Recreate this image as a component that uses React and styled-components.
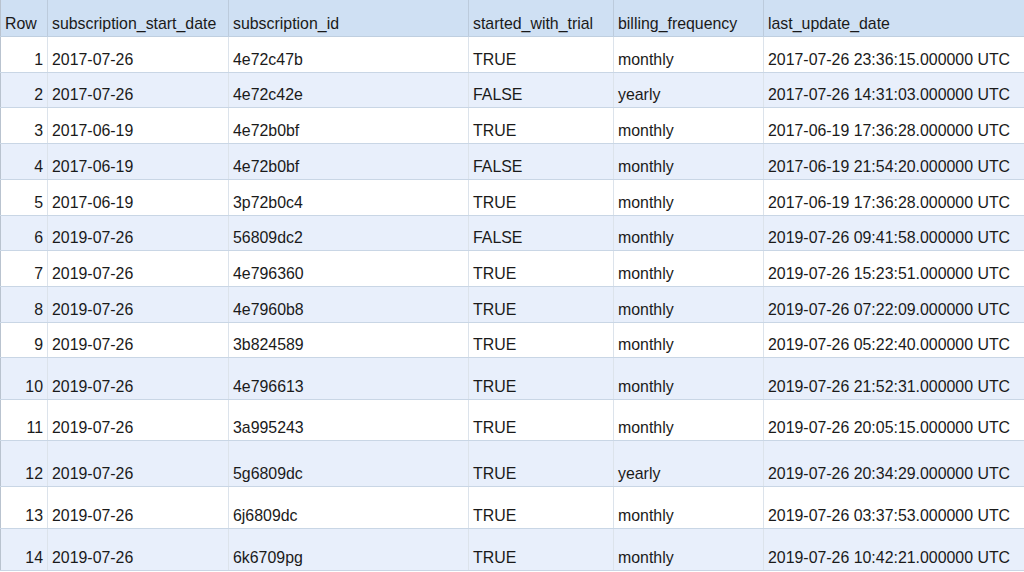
import React from 'react'
import styled, { createGlobalStyle } from 'styled-components'

const GlobalStyle = createGlobalStyle`
  body {
    margin: 0;
    background: #ffffff;
    font-family: "Liberation Sans", Arial, sans-serif;
    overflow: hidden;
  }
`

const Table = styled.table`
  border-collapse: collapse;
  table-layout: fixed;
  width: 1024px;
  font-size: 15.9px;
  color: #1a1a1a;
  border-left: 1px solid #b9c3cf;
`

const HeadRow = styled.tr`
  height: 36px;
`

const HeadCell = styled.th`
  background: #cfe0f3;
  padding: 0 4px 3px;
  font-weight: 400;
  text-align: left;
  vertical-align: bottom;
  border-right: 1px solid #bccbdc;
  border-bottom: 1px solid #bfcfe0;
  white-space: nowrap;
  overflow: hidden;
  line-height: 18px;
`

const Row = styled.tr`
  height: ${({ $h }) => $h}px;
  background: ${({ $alt }) => ($alt ? '#e8effb' : '#ffffff')};
`

const Cell = styled.td`
  padding: 0 4px 3px;
  vertical-align: bottom;
  text-align: ${({ $num }) => ($num ? 'right' : 'left')};
  border-right: 1px solid #dce3eb;
  border-bottom: 1px solid #c9d6e5;
  white-space: nowrap;
  overflow: hidden;
  line-height: 18px;
`

const columns = [
  { key: 'row', title: 'Row', width: 47 },
  { key: 'start', title: 'subscription_start_date', width: 181 },
  { key: 'id', title: 'subscription_id', width: 240 },
  { key: 'trial', title: 'started_with_trial', width: 145 },
  { key: 'freq', title: 'billing_frequency', width: 150 },
  { key: 'updated', title: 'last_update_date', width: 261 },
]

const rows = [
  ['2017-07-26', '4e72c47b', 'TRUE', 'monthly', '2017-07-26 23:36:15.000000 UTC', 36],
  ['2017-07-26', '4e72c42e', 'FALSE', 'yearly', '2017-07-26 14:31:03.000000 UTC', 35],
  ['2017-06-19', '4e72b0bf', 'TRUE', 'monthly', '2017-06-19 17:36:28.000000 UTC', 36],
  ['2017-06-19', '4e72b0bf', 'FALSE', 'monthly', '2017-06-19 21:54:20.000000 UTC', 36],
  ['2017-06-19', '3p72b0c4', 'TRUE', 'monthly', '2017-06-19 17:36:28.000000 UTC', 36],
  ['2019-07-26', '56809dc2', 'FALSE', 'monthly', '2019-07-26 09:41:58.000000 UTC', 35],
  ['2019-07-26', '4e796360', 'TRUE', 'monthly', '2019-07-26 15:23:51.000000 UTC', 36],
  ['2019-07-26', '4e7960b8', 'TRUE', 'monthly', '2019-07-26 07:22:09.000000 UTC', 36],
  ['2019-07-26', '3b824589', 'TRUE', 'monthly', '2019-07-26 05:22:40.000000 UTC', 35],
  ['2019-07-26', '4e796613', 'TRUE', 'monthly', '2019-07-26 21:52:31.000000 UTC', 42],
  ['2019-07-26', '3a995243', 'TRUE', 'monthly', '2019-07-26 20:05:15.000000 UTC', 41],
  ['2019-07-26', '5g6809dc', 'TRUE', 'yearly', '2019-07-26 20:34:29.000000 UTC', 46],
  ['2019-07-26', '6j6809dc', 'TRUE', 'monthly', '2019-07-26 03:37:53.000000 UTC', 42],
  ['2019-07-26', '6k6709pg', 'TRUE', 'monthly', '2019-07-26 10:42:21.000000 UTC', 42],
]

const App = () => (
  <React.Fragment>
    <GlobalStyle />
    <Table>
      <colgroup>
        {columns.map((c) => (
          <col key={c.key} style={{ width: c.width }} />
        ))}
      </colgroup>
      <thead>
        <HeadRow>
          {columns.map((c) => (
            <HeadCell key={c.key}>{c.title}</HeadCell>
          ))}
        </HeadRow>
      </thead>
      <tbody>
        {rows.map((r, i) => (
          <Row key={i} $h={r[5]} $alt={i % 2 === 1}>
            <Cell $num>{i + 1}</Cell>
            {r.slice(0, 5).map((v, j) => (
              <Cell key={j}>{v}</Cell>
            ))}
          </Row>
        ))}
      </tbody>
    </Table>
  </React.Fragment>
)

export default App
